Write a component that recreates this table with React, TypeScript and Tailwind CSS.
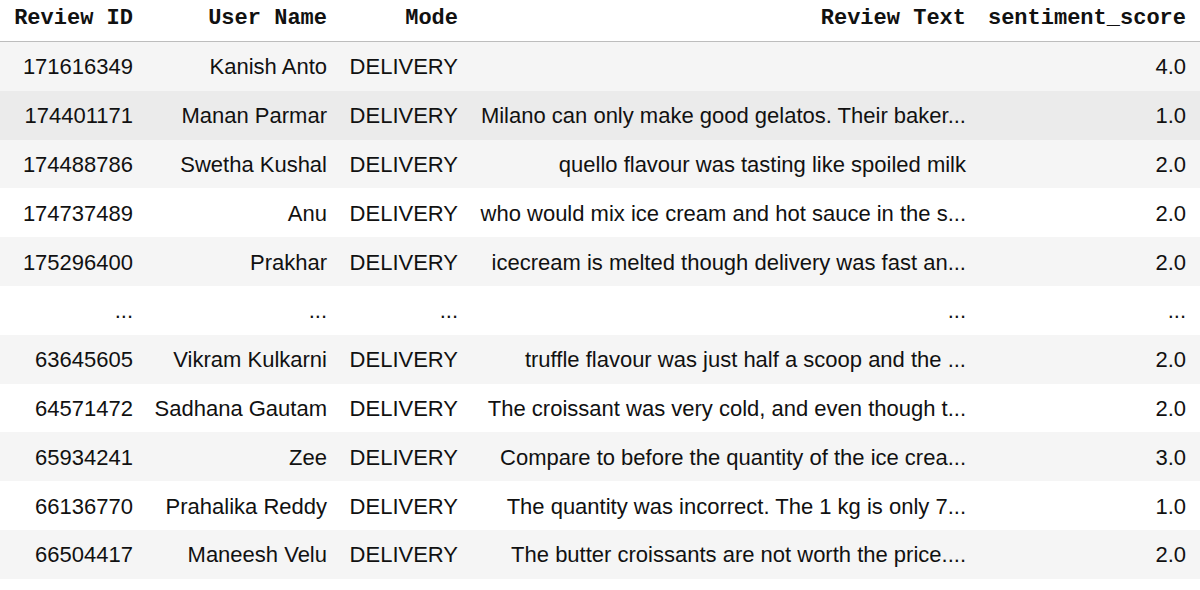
import React from "react";

const rows: [string, string, string, string, string][] = [
  ["171616349", "Kanish Anto", "DELIVERY", "", "4.0"],
  ["174401171", "Manan Parmar", "DELIVERY", "Milano can only make good gelatos. Their baker...", "1.0"],
  ["174488786", "Swetha Kushal", "DELIVERY", "quello flavour was tasting like spoiled milk", "2.0"],
  ["174737489", "Anu", "DELIVERY", "who would mix ice cream and hot sauce in the s...", "2.0"],
  ["175296400", "Prakhar", "DELIVERY", "icecream is melted though delivery was fast an...", "2.0"],
  ["...", "...", "...", "...", "..."],
  ["63645605", "Vikram Kulkarni", "DELIVERY", "truffle flavour was just half a scoop and the ...", "2.0"],
  ["64571472", "Sadhana Gautam", "DELIVERY", "The croissant was very cold, and even though t...", "2.0"],
  ["65934241", "Zee", "DELIVERY", "Compare to before the quantity of the ice crea...", "3.0"],
  ["66136770", "Prahalika Reddy", "DELIVERY", "The quantity was incorrect. The 1 kg is only 7...", "1.0"],
  ["66504417", "Maneesh Velu", "DELIVERY", "The butter croissants are not worth the price....", "2.0"],
];

const headers = ["Review ID", "User Name", "Mode", "Review Text", "sentiment_score"];

const grid = "grid grid-cols-[145px_194px_131px_508px_220px]";

export default function App() {
  return (
    <div className="w-[1200px] h-[590px] bg-white overflow-hidden">
      <div
        className={`${grid} h-[42px] border-b border-[#bdbdbd] items-end pb-[11px] text-[22px] font-bold text-[#111]`}
        style={{ fontFamily: '"Liberation Mono", "Courier New", monospace' }}
      >
        {headers.map((h) => (
          <div key={h} className="text-right pr-[12px] leading-none whitespace-pre">
            {h}
          </div>
        ))}
      </div>
      <div style={{ fontFamily: '"Liberation Sans", Arial, Helvetica, sans-serif' }}>
        {rows.map((r, i) => (
          <div
            key={i}
            className={`${grid} h-[48.8px] items-center pt-[2px] text-[22px] text-[#111] ${
              i === 1 ? "bg-[#ebebeb]" : i % 2 === 0 ? "bg-[#f5f5f5]" : "bg-white"
            }`}
          >
            {r.map((c, j) => (
              <div key={j} className="text-right pr-[12px] whitespace-pre leading-none">
                {c}
              </div>
            ))}
          </div>
        ))}
      </div>
    </div>
  );
}
